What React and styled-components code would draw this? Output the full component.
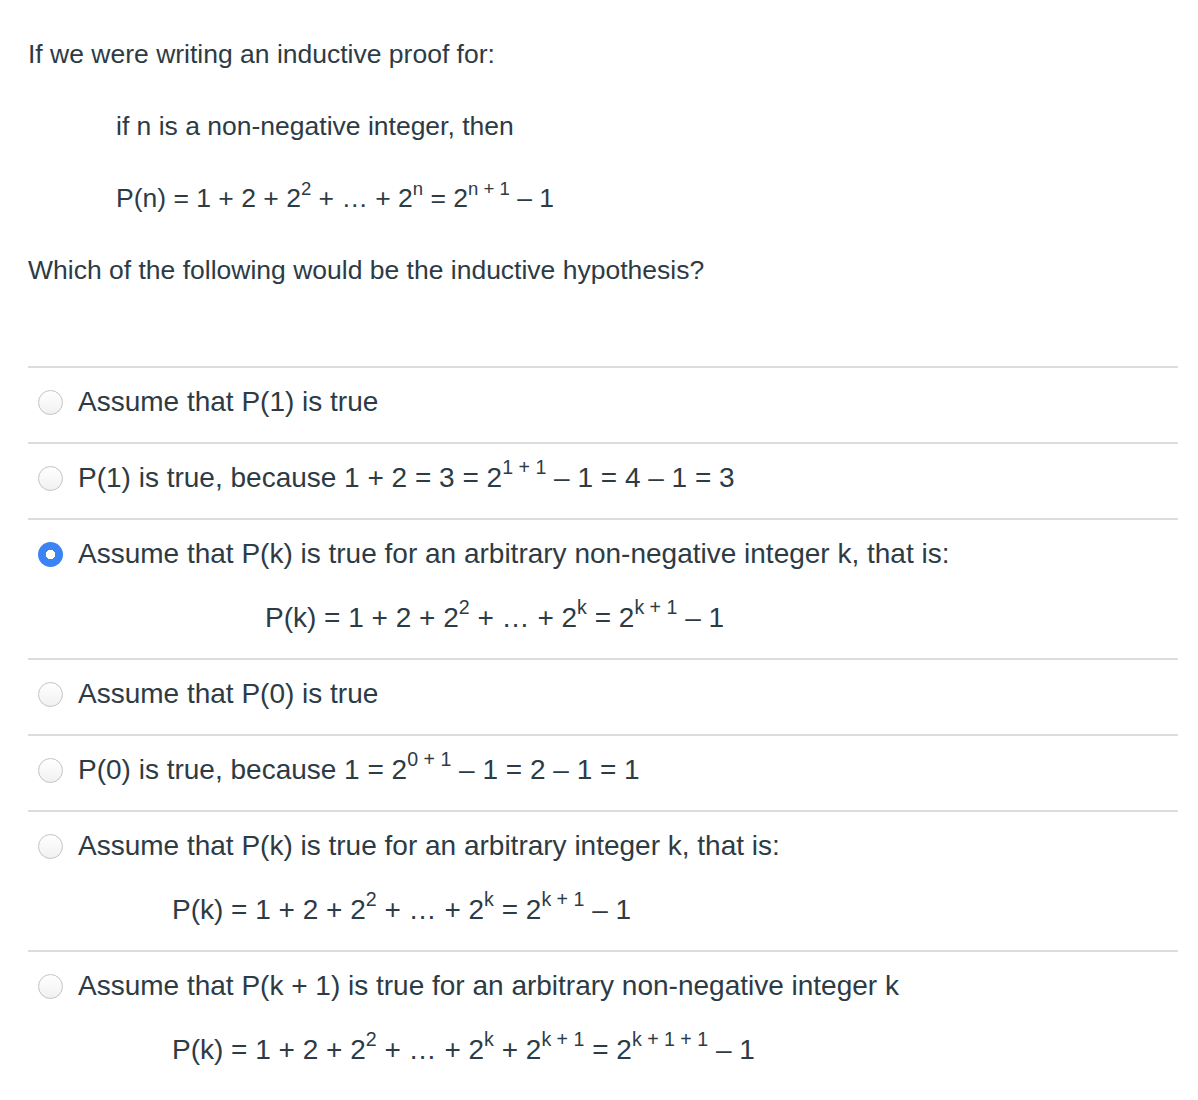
import React from 'react'
import styled, { createGlobalStyle } from 'styled-components'

const GlobalStyle = createGlobalStyle`
    body {
        margin: 0;
        background: #ffffff;
        font-family: "Liberation Sans", Arial, Helvetica, sans-serif;
        color: #2d3b45;
    }
`

const Page = styled.div`
    padding: 34px 20px 20px 28px;
`

const Question = styled.div`
    font-size: 26.5px;
    line-height: 40px;
`

const Para = styled.p`
    margin: 0 0 32px;
    padding-left: ${props => props.indent || 0}px;
    white-space: nowrap;
`

const Answers = styled.div`
    margin-top: 76px;
`

const Row = styled.div`
    border-top: 2px solid #dcdcdc;
    padding: 14px 0 20px;
    font-size: 28px;
    line-height: 40px;
`

const Label = styled.div`
    display: flex;
    align-items: center;
    gap: 15px;
    padding-left: 10px;
    white-space: nowrap;
`

const Radio = styled.span`
    flex: none;
    width: 25px;
    height: 25px;
    border-radius: 50%;
    box-sizing: border-box;
    border: ${props => props.checked ? 'none' : '1px solid #c4c4c4'};
    background: ${props => props.checked
        ? 'radial-gradient(circle, #ffffff 0 4.5px, #3a84f6 5px)'
        : 'linear-gradient(#ffffff, #f1f1f1)'};
`

const Formula = styled.div`
    margin-top: 24px;
    padding-left: ${props => props.indent}px;
    white-space: nowrap;
`

const Sup = styled.sup`
    font-size: 0.7em;
    line-height: 0;
    vertical-align: 0.66em;
`

const answers = [
    { text: <>Assume that P(1) is true</> },
    { text: <>P(1) is true, because 1 + 2 = 3 = 2<Sup>1 + 1</Sup> – 1 = 4 – 1 = 3</> },
    {
        text: <>Assume that P(k) is true for an arbitrary non-negative integer k, that is:</>,
        checked: true,
        formula: <>P(k) = 1 + 2 + 2<Sup>2</Sup> + … + 2<Sup>k</Sup> = 2<Sup>k + 1</Sup> – 1</>,
        indent: 187,
    },
    { text: <>Assume that P(0) is true</> },
    { text: <>P(0) is true, because 1 = 2<Sup>0 + 1</Sup> – 1 = 2 – 1 = 1</> },
    {
        text: <>Assume that P(k) is true for an arbitrary integer k, that is:</>,
        formula: <>P(k) = 1 + 2 + 2<Sup>2</Sup> + … + 2<Sup>k</Sup> = 2<Sup>k + 1</Sup> – 1</>,
        indent: 94,
    },
    {
        text: <>Assume that P(k + 1) is true for an arbitrary non-negative integer k</>,
        formula: <>P(k) = 1 + 2 + 2<Sup>2</Sup> + … + 2<Sup>k</Sup> + 2<Sup>k + 1</Sup> = 2<Sup>k + 1 + 1</Sup> – 1</>,
        indent: 94,
    },
]

export default function App() {
    return (
        <Page>
            <GlobalStyle />
            <Question>
                <Para>If we were writing an inductive proof for:</Para>
                <Para indent={88}>if n is a non-negative integer, then</Para>
                <Para indent={88}>P(n) = 1 + 2 + 2<Sup>2</Sup> + … + 2<Sup>n</Sup> = 2<Sup>n + 1</Sup> – 1</Para>
                <Para>Which of the following would be the inductive hypothesis?</Para>
            </Question>
            <Answers>
                {answers.map((a, i) => (
                    <Row key={i}>
                        <Label>
                            <Radio checked={a.checked} />
                            <span>{a.text}</span>
                        </Label>
                        {a.formula && (
                            <Formula indent={50 + a.indent}>{a.formula}</Formula>
                        )}
                    </Row>
                ))}
            </Answers>
        </Page>
    )
}
